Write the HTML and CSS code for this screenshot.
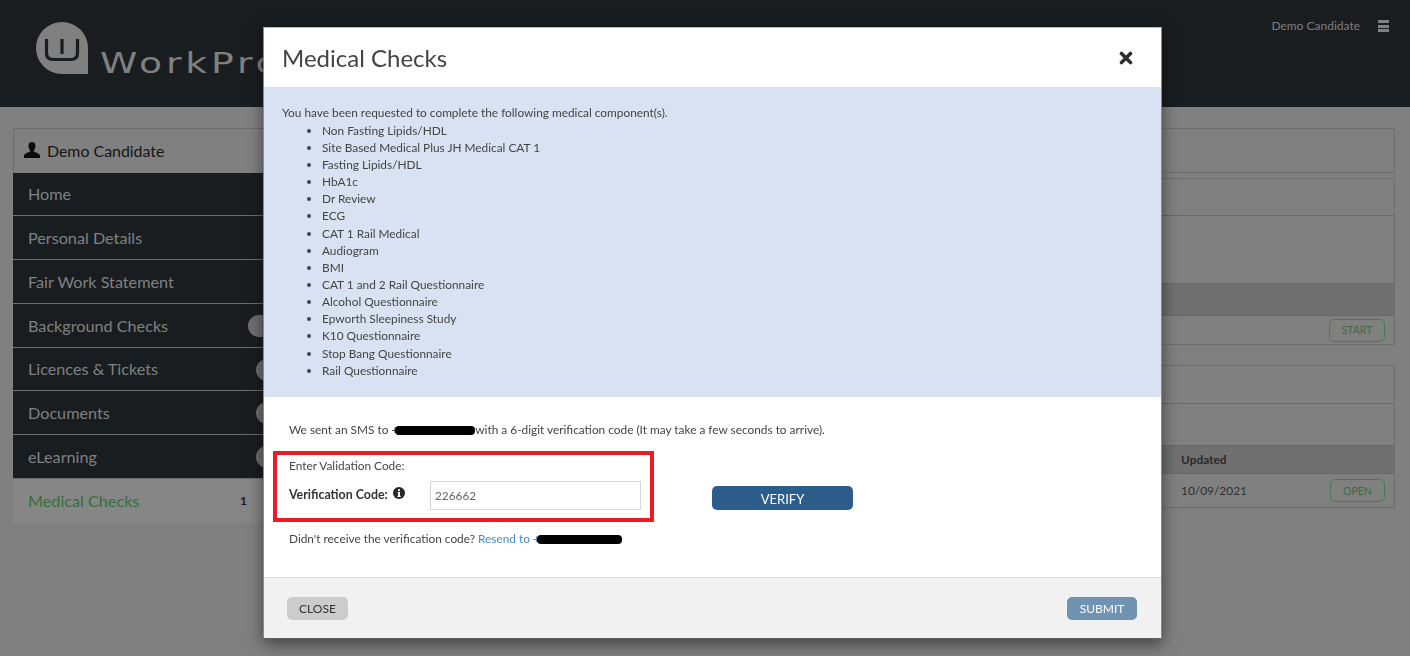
FILE: index.html
```html
<!DOCTYPE html>
<html lang="en">
<head>
<meta charset="utf-8">
<title>Medical Checks</title>
<link rel="stylesheet" href="styles.css">
</head>
<body>
<header class="topbar">
  <div class="brand">
    <svg class="brand-mark" viewBox="0 0 52 52" width="52" height="52" aria-hidden="true">
      <path class="mark-fill" d="M26 0A26 26 0 0 0 26 52H52V26A26 26 0 0 0 26 0Z"/>
      <path class="mark-cut" d="M10.500 17V31Q10.500 37.500 17 37.500H35Q41.500 37.500 41.500 31V17M26 17V32" fill="none" stroke-width="3.200"/>
    </svg>
    <span class="brand-name">WorkPro</span>
  </div>
  <div class="account">
    <span>Demo Candidate</span>
    <span class="burger"><i></i><i></i><i></i></span>
  </div>
</header>
<div class="page">
  <aside class="sidebar">
    <div class="user">
      <svg viewBox="0 0 16 16" width="16" height="16" aria-hidden="true"><path d="M8 0C5.500 0 4.300 2 4.500 4.300 4.600 6 5.300 7.300 6.100 8.200V9.500C4.500 10.500.5 11 0 13.500V16H16V13.500C15.500 11 11.500 10.500 9.900 9.500V8.200C10.700 7.300 11.400 6 11.500 4.300 11.700 2 10.500 0 8 0Z" fill="#0d0d0d"/></svg>
      <span>Demo Candidate</span>
    </div>
    <nav class="menu">
      <a class="item">Home</a>
      <a class="item">Personal Details</a>
      <a class="item">Fair Work Statement</a>
      <a class="item">Background Checks<b class="pill pill-wide">1</b></a>
      <a class="item">Licences &amp; Tickets<b class="pill">1</b></a>
      <a class="item">Documents<b class="pill">1</b></a>
      <a class="item">eLearning<b class="pill">1</b></a>
      <a class="item item-active">Medical Checks<b class="count">1</b></a>
    </nav>
  </aside>
  <main class="main">
    <section class="panel panel-lone"></section>
    <section class="panel panel-tasks">
      <div class="row row-sub"></div>
      <div class="row row-info"></div>
      <div class="row row-head"></div>
      <div class="row row-data"><span class="ghost ghost-start">START</span></div>
    </section>
    <section class="panel panel-docs">
      <div class="row row-title2"></div>
      <div class="row row-info2"></div>
      <div class="row row-head2"><span class="col">Updated</span></div>
      <div class="row row-data2"><span class="col col-date">10/09/2021</span><span class="ghost ghost-open">OPEN</span></div>
    </section>
  </main>
</div>
<div class="modal">
  <div class="modal-head">
    <h1>Medical Checks</h1>
    <svg viewBox="0 0 14 14" width="14" height="14" aria-hidden="true"><path d="M2.500 2.500 11.500 11.500M11.500 2.500 2.500 11.500" stroke="#2f2f2f" stroke-width="3.600" stroke-linecap="round"/></svg>
  </div>
  <div class="notice">
    <p>You have been requested to complete the following medical component(s).</p>
    <ul>
      <li>Non Fasting Lipids/HDL</li>
      <li>Site Based Medical Plus JH Medical CAT 1</li>
      <li>Fasting Lipids/HDL</li>
      <li>HbA1c</li>
      <li>Dr Review</li>
      <li>ECG</li>
      <li>CAT 1 Rail Medical</li>
      <li>Audiogram</li>
      <li>BMI</li>
      <li>CAT 1 and 2 Rail Questionnaire</li>
      <li>Alcohol Questionnaire</li>
      <li>Epworth Sleepiness Study</li>
      <li>K10 Questionnaire</li>
      <li>Stop Bang Questionnaire</li>
      <li>Rail Questionnaire</li>
    </ul>
  </div>
  <div class="verify">
    <p class="sms">We sent an SMS to +<span class="scribble scribble-a"></span>with a 6-digit verification code (It may take a few seconds to arrive).</p>
    <div class="code-line">
      <div class="red-box">
        <div class="enter">Enter Validation Code:</div>
        <div class="code-row">
          <label>Verification Code:</label>
          <svg viewBox="0 0 12 12" width="12" height="12" aria-hidden="true"><circle cx="6" cy="6" r="6" fill="#262626"/><path d="M5 2.200H7V4H5ZM4.600 5H7V8.800H7.700V10H4.400V8.800H5.100V6.100H4.600Z" fill="#fff"/></svg>
          <input type="text" value="226662">
        </div>
      </div>
      <button class="btn-verify" type="button">VERIFY</button>
    </div>
    <p class="resend">Didn't receive the verification code? <a>Resend to +</a><span class="scribble scribble-b"></span></p>
  </div>
  <div class="modal-foot">
    <button class="btn-close" type="button">CLOSE</button>
    <button class="btn-submit" type="button">SUBMIT</button>
  </div>
</div>
</body>
</html>
```

FILE: styles.css
```css
* { box-sizing: border-box; }
html, body { height: 100%; }
html { background: #808080; }
body {
  margin: 0;
  height: 656px;
  overflow: hidden;
  background: #808080;
  font-family: Lato, "Liberation Sans", sans-serif;
  font-size: 11.850px;
  color: #333;
}

.topbar {
  height: 107px;
  background: #1a1d20;
  display: flex;
  justify-content: space-between;
  padding: 22px 21px 0 36px;
}
.brand { display: flex; align-items: flex-start; }
.brand-mark { flex: none; }
.mark-fill { fill: #808080; }
.mark-cut { stroke: #1a1d20; }
.brand-name {
  display: inline-block;
  margin: 22px 0 0 12px;
  font-family: "DejaVu Sans", sans-serif;
  font-size: 29px;
  line-height: 38px;
  letter-spacing: 3px;
  color: #808080;
  transform: scaleX(1.3);
  transform-origin: left center;
}
.account {
  display: flex;
  align-items: flex-start;
  gap: 18px;
  margin-top: -3px;
  color: #7d7d7d;
  font-size: 12px;
  line-height: 13px;
}
.burger { width: 11px; display: flex; flex-direction: column; gap: 1.500px; padding-top: 1px; }
.burger i { display: block; height: 3px; background: #808080; }

.page {
  display: flex;
  padding: 21px 15px 0 13px;
  background: #808080;
  height: 549px;
}
.sidebar { width: 281px; flex: none; }
.user {
  height: 44.500px;
  display: flex;
  align-items: center;
  gap: 8px;
  padding: 0 0 1px 10px;
  border: 1px solid #6e6e6e;
  border-bottom: 0;
  font-size: 15.900px;
  color: #151515;
}
.user svg { margin-right: -1px; }
.menu { display: flex; flex-direction: column; }
.item {
  height: 43.750px;
  display: flex;
  align-items: center;
  justify-content: space-between;
  padding: 0 15px;
  background: #1a1d20;
  border-bottom: 1px solid #6c6c6c;
  color: #7f8183;
  font-size: 16.200px;
  position: relative;
}
.item-active {
  background: #868686;
  border-bottom: 0;
  color: #347039;
}
.pill {
  position: absolute;
  left: 243px;
  top: 11px;
  width: 34px;
  height: 22px;
  border-radius: 11px;
  background: #6f6f6f;
  color: #555;
  font-size: 12px;
  font-weight: 400;
  line-height: 22px;
  padding-left: 12px;
}
.pill-wide { left: 235px; width: 42px; }
.count {
  position: absolute;
  left: 227px;
  top: 14px;
  font-size: 12px;
  font-weight: 700;
  color: #1c1c2a;
}

.main { flex: 1; display: flex; flex-direction: column; padding-left: 12px; }
.panel { border: 1px solid #6e6e6e; display: flex; flex-direction: column; }
.panel-lone { height: 45px; }
.panel-tasks { margin-top: 5px; height: 167px; }
.panel-docs { margin-top: 20px; height: 143px; }
.row { position: relative; display: flex; align-items: center; justify-content: flex-end; }
.row-sub { height: 37px; border-bottom: 1px solid #6a6a6a; }
.row-info { height: 67px; }
.row-head { height: 33px; background: #707070; border-top: 1px solid #686868; border-bottom: 1px solid #686868; }
.row-data { flex: 1; padding-right: 9px; }
.row-title2 { height: 38px; border-bottom: 1px solid #6a6a6a; }
.row-info2 { height: 42px; border-bottom: 1px solid #6a6a6a; }
.row-head2 { height: 28px; background: #707070; border-bottom: 1px solid #686868; justify-content: flex-start; padding-left: 874px; }
.row-data2 { flex: 1; justify-content: space-between; padding: 0 9px 0 874px; }
.col { font-size: 11.900px; color: #2a2a2a; font-weight: 700; }
.col-date { font-weight: 400; color: #2f2f2f; }
.ghost {
  border: 1.500px solid #4d7a54;
  border-radius: 5px;
  color: #3f6a47;
  font-size: 10.500px;
  height: 23px;
  display: flex;
  align-items: center;
  justify-content: center;
}
.ghost-start { width: 56px; }
.ghost-open { width: 55px; }

.modal {
  position: fixed;
  left: 263px;
  top: 27px;
  width: 899px;
  height: 612px;
  display: flex;
  flex-direction: column;
  background: #fff;
  border: 1px solid;
  border-color: #b5b5b5 #8a8a8a #5e5e5e #8a8a8a;
  box-shadow: 0 5px 15px rgba(0, 0, 0, .5);
}
.modal-head {
  height: 59px;
  flex: none;
  display: flex;
  align-items: center;
  justify-content: space-between;
  padding: 0 28px 0 18px;
}
.modal-head h1 { margin: 0; font-size: 24px; font-weight: 400; color: #444; }
.notice {
  height: 310px;
  flex: none;
  background: #d9e2f3;
  padding: 17px 18px 0;
  line-height: 17.140px;
  color: #444;
}
.notice p { margin: 0 0 .6px; }
.notice ul { margin: 0; padding: 0 0 0 40px; }
.verify { flex: 1; padding-top: 24px; color: #444; line-height: 17px; }
.sms { margin: 0 0 13px 25px; }
.scribble { display: inline-block; background: #000; border-radius: 4px; vertical-align: -1px; height: 9px; margin-left: -3px; }
.scribble-a { width: 80px; }
.scribble-b { width: 85px; }
.code-line { display: flex; align-items: flex-start; margin-left: 9px; }
.red-box {
  width: 381px;
  height: 71px;
  border: 4px solid #ed1c24;
  padding: 0 8px 0 12px;
}
.enter { height: 21px; display: flex; align-items: center; }
.code-row { display: flex; align-items: center; margin-top: 5px; }
.code-row label { flex: none; font-weight: 700; font-size: 12.400px; color: #333; width: 104px; margin-top: -3px; }
.code-row svg { flex: none; margin-top: -5px; }
.code-row input {
  flex: none;
  margin-left: 25px;
  width: 211px;
  height: 29px;
  border: 1px solid #d6d6d6;
  padding: 0 4px;
  font: inherit;
  color: #666;
  background: #fff;
}
.btn-verify {
  margin: 35px 0 0 58px;
  width: 141px;
  height: 24px;
  border: 0;
  border-radius: 5px;
  padding: 2px 0 0;
  background: #2b5c8a;
  color: #fff;
  font: 13px Lato, sans-serif;
}
.resend { margin: 8px 0 0 25px; }
.resend a { color: #428bca; }
.modal-foot {
  height: 61px;
  flex: none;
  background: #f1f1f1;
  border-top: 1px solid #ddd;
  display: flex;
  justify-content: space-between;
  align-items: center;
  padding: 0 24px 0 23px;
}
.modal-foot button {
  height: 23px;
  border: 0;
  border-radius: 5px;
  font: 12px Lato, sans-serif;
}
.btn-close { width: 61px; background: #ccc; color: #333; }
.btn-submit { width: 70px; background: #7093b1; color: #fff; }
```
